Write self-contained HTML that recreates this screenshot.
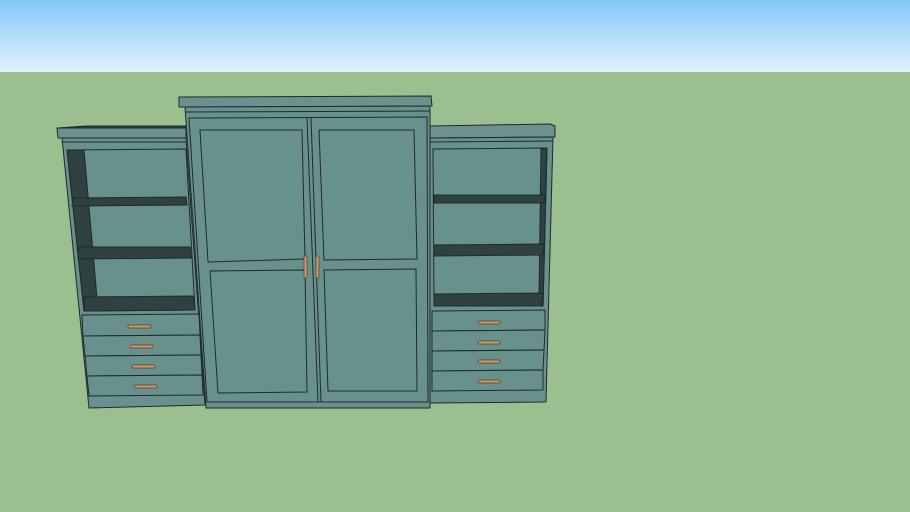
<!DOCTYPE html>
<html><head><meta charset="utf-8"><style>
html,body{margin:0;padding:0;width:910px;height:512px;overflow:hidden;background:#9bbf8f}
svg{display:block}
</style></head><body>
<svg width="910" height="512" viewBox="0 0 910 512" xmlns="http://www.w3.org/2000/svg">
<defs><linearGradient id="sky" x1="0" y1="0" x2="0" y2="1">
<stop offset="0" stop-color="#84c8f9"/><stop offset="1" stop-color="#e2f1fc"/></linearGradient></defs>
<rect x="0" y="0" width="910" height="72" fill="url(#sky)"/>
<rect x="0" y="72" width="910" height="440" fill="#9bbf8f"/>
<g stroke="#1e2b2a" stroke-width="1" stroke-linejoin="round">
<!-- LEFT UNIT -->
<polygon points="57,128 186,127 186,138 58,138" fill="#6a928e"/>
<polygon points="58,128 86,126 186,126 186,128" fill="#2f4240"/>
<polygon points="62,138 186,138 205,405 89,408" fill="#68908c"/>
<polygon points="62,142 186,142" fill="none"/>
<polygon points="67,150 186,149 195,310 84,311" fill="#68908c"/>
<polygon points="67,150 84,150 97,298 84,311" fill="#2f4240"/>
<polygon points="73,198 186,197 187,205 72,206" fill="#2f4240"/>
<polygon points="79,247 190,247 191,258 78,259" fill="#2f4240"/>
<polygon points="84,297 194,296 195,310 84,311" fill="#2f4240"/>
<polygon points="82,315 199,314 200,335 83,336" fill="#68908c"/>
<polygon points="83,336 200,335 201,355 85,356" fill="#68908c"/>
<polygon points="85,356 201,355 202,375 87,376" fill="#68908c"/>
<polygon points="87,376 202,375 203,395 89,396" fill="#68908c"/>
<!-- CENTER UNIT -->
<polygon points="179,97 431,96 432,106 179,107" fill="#6a928e"/>
<polygon points="185,107 430,106 430,408 206,408" fill="#68908c"/>
<polygon points="189,118 427,117 428,402 207,402" fill="#68908c"/>
<line x1="186" y1="112" x2="430" y2="111"/>
<line x1="307" y1="118" x2="318" y2="402"/>
<line x1="311" y1="118" x2="321" y2="402"/>
<polygon points="200,130 302,130 305,259 208,262" fill="#68908c"/>
<polygon points="210,271 305,270 307,392 218,393" fill="#68908c"/>
<polygon points="319,130 414,130 417,259 324,260" fill="#68908c"/>
<polygon points="324,270 416,269 417,391 328,391" fill="#68908c"/>
<!-- RIGHT UNIT -->
<polygon points="430,126 550,124 555,126 555,137 430,138" fill="#6a928e"/>
<polygon points="430,138 553,137 546,402 430,403" fill="#68908c"/>
<line x1="430" y1="142" x2="553" y2="141"/>
<polygon points="433,149 547,148 543,306 434,306" fill="#68908c"/>
<polygon points="541,149 547,148 543,306 539,300" fill="#2f4240"/>
<polygon points="434,195 545,195 544,203 434,203" fill="#2f4240"/>
<polygon points="434,245 544,244 543,255 434,256" fill="#2f4240"/>
<polygon points="434,294 543,293 542,306 434,306" fill="#2f4240"/>
<polygon points="432,311 545,310 545,330 432,331" fill="#68908c"/>
<polygon points="432,331 545,330 544,350 432,351" fill="#68908c"/>
<polygon points="432,351 544,350 543,370 432,371" fill="#68908c"/>
<polygon points="432,371 543,370 543,390 432,391" fill="#68908c"/>
</g>
<!-- handles -->
<g fill="#c79a6b" stroke="#5a4030" stroke-width="0.7">
<rect x="128" y="325" width="23" height="3" rx="1"/>
<rect x="130" y="345" width="23" height="3" rx="1"/>
<rect x="132" y="365" width="23" height="3" rx="1"/>
<rect x="134" y="385" width="23" height="3" rx="1"/>
<rect x="478" y="321" width="22" height="3" rx="1"/>
<rect x="478" y="341" width="22" height="3" rx="1"/>
<rect x="478" y="360" width="22" height="3" rx="1"/>
<rect x="478" y="380" width="22" height="3" rx="1"/>
<rect x="304" y="256" width="3" height="22" rx="1"/>
<rect x="316" y="256" width="3" height="22" rx="1"/>
</g>
</svg>
</body></html>
